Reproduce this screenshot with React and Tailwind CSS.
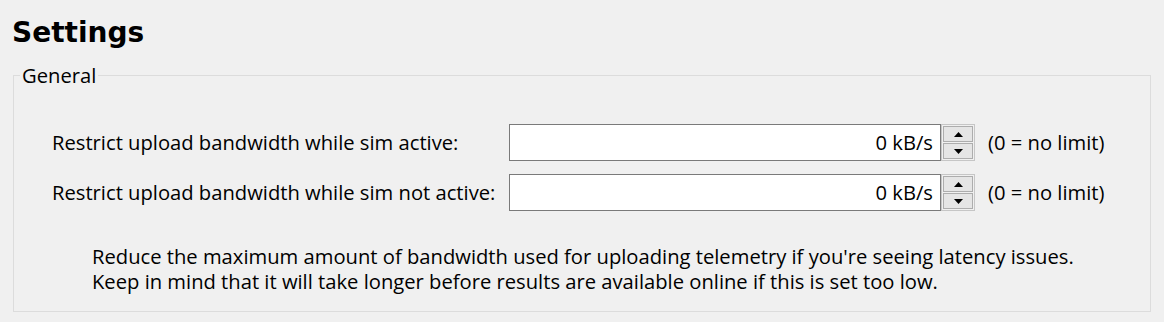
const ROWS = [
  'Restrict upload bandwidth while sim active:',
  'Restrict upload bandwidth while sim not active:',
]

function Spinner() {
  return (
    <div className="flex flex-col w-[34px] h-[37px] border border-[#c6c6c6] bg-[#f0f0f0] p-[1px] gap-[1px]">
      <button className="flex-1 flex items-center justify-center bg-[#e5e5e5] border border-[#adadad]">
        <svg width="9" height="5" viewBox="0 0 9 5"><path d="M0 5 L4.5 0 L9 5 Z" fill="#000" /></svg>
      </button>
      <button className="flex-1 flex items-center justify-center bg-[#e5e5e5] border border-[#adadad]">
        <svg width="9" height="5" viewBox="0 0 9 5"><path d="M0 0 L4.5 5 L9 0 Z" fill="#000" /></svg>
      </button>
    </div>
  )
}

function BandwidthRow({ label }) {
  return (
    <div className="flex items-center">
      <div className="w-[457px] shrink-0">{label}</div>
      <div className="flex items-center">
        <div className="w-[432px] h-[37px] bg-white border border-[#7a7a7a] flex items-center justify-end pr-[7px]">
          0 kB/s
        </div>
        <Spinner />
      </div>
      <div className="ml-[13px]">(0 = no limit)</div>
    </div>
  )
}

export default function App() {
  return (
    <div
      className="w-[1164px] h-[322px] bg-[#f0f0f0] overflow-hidden text-black text-[20.2px] leading-[25px]"
      style={{ fontFamily: '"Open Sans", "Noto Sans", sans-serif' }}
    >
      <h1
        className="pl-[12px] pt-[16px] text-[28px] leading-[34px] font-bold"
        style={{ fontFamily: '"DejaVu Sans", Verdana, sans-serif' }}
      >
        Settings
      </h1>
      <fieldset className="mx-[13px] mt-[13px] border border-[#dcdcdc] h-[249px] pl-[38px]">
        <legend className="ml-[-32px] px-[2px]">General</legend>
        <div className="mt-[36px] flex flex-col gap-[13px]">
          {ROWS.map((r) => (
            <BandwidthRow key={r} label={r} />
          ))}
        </div>
        <p className="mt-[33px] pl-[40px]">
          Reduce the maximum amount of bandwidth used for uploading telemetry if you're seeing latency issues.
          <br />
          Keep in mind that it will take longer before results are available online if this is set too low.
        </p>
      </fieldset>
    </div>
  )
}
